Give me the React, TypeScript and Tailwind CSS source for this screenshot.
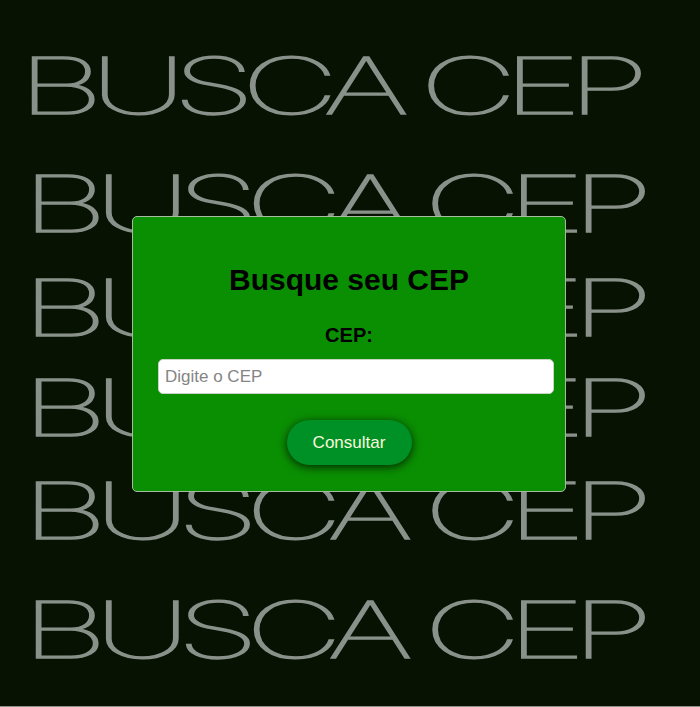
import React from "react";

function Row({ className }: { className: string }) {
  return (
    <div className={`h-[78px] leading-none whitespace-nowrap ${className}`}>
      <span
        className="inline-block origin-left scale-x-[1.715] text-[78px] leading-none font-thin tracking-[-0.1em] text-[#8a918a] [-webkit-text-stroke:1.6px_#8a918a]"
        style={{ fontFamily: "Inter, 'Noto Sans', sans-serif" }}
      >
        BUSCA CEP
      </span>
    </div>
  );
}

export default function App() {
  return (
    <div className="relative h-[707px] w-full overflow-hidden bg-[#081203] border-b border-[#8a918a]">
      <div className="flex flex-col pt-[47px]">
        <Row className="ml-[18px]" />
        <Row className="ml-[22px] mt-[40px]" />
        <Row className="ml-[22px] mt-[26px]" />
        <Row className="ml-[22px] mt-[22px]" />
        <Row className="ml-[22px] mt-[25px]" />
        <Row className="ml-[22px] mt-[41px]" />
      </div>

      <div
        className="absolute left-[132px] top-[216px] flex h-[276px] w-[434px] flex-col items-center rounded-[5px] border border-[#a6bca0] bg-[#0a8f03]"
        style={{ fontFamily: "'Liberation Sans', Arial, sans-serif" }}
      >
        <h1 className="mt-[48px] text-[30px] font-bold leading-none text-black">Busque seu CEP</h1>
        <label className="mt-[30px] text-[20px] font-bold leading-none text-black">CEP:</label>
        <input
          type="text"
          placeholder="Digite o CEP"
          className="ml-[25px] mt-[14px] h-[35px] w-[396px] self-start rounded-[5px] border border-[#c9d3c6] bg-white px-[6px] text-[17px] text-black outline-none placeholder:text-[#858585]"
        />
        <button className="mt-[26px] h-[45px] w-[125px] rounded-full bg-[#009126] text-[17px] text-[#fbf8dc] shadow-[0_2px_10px_rgba(0,0,0,0.75)]">
          Consultar
        </button>
      </div>
    </div>
  );
}
